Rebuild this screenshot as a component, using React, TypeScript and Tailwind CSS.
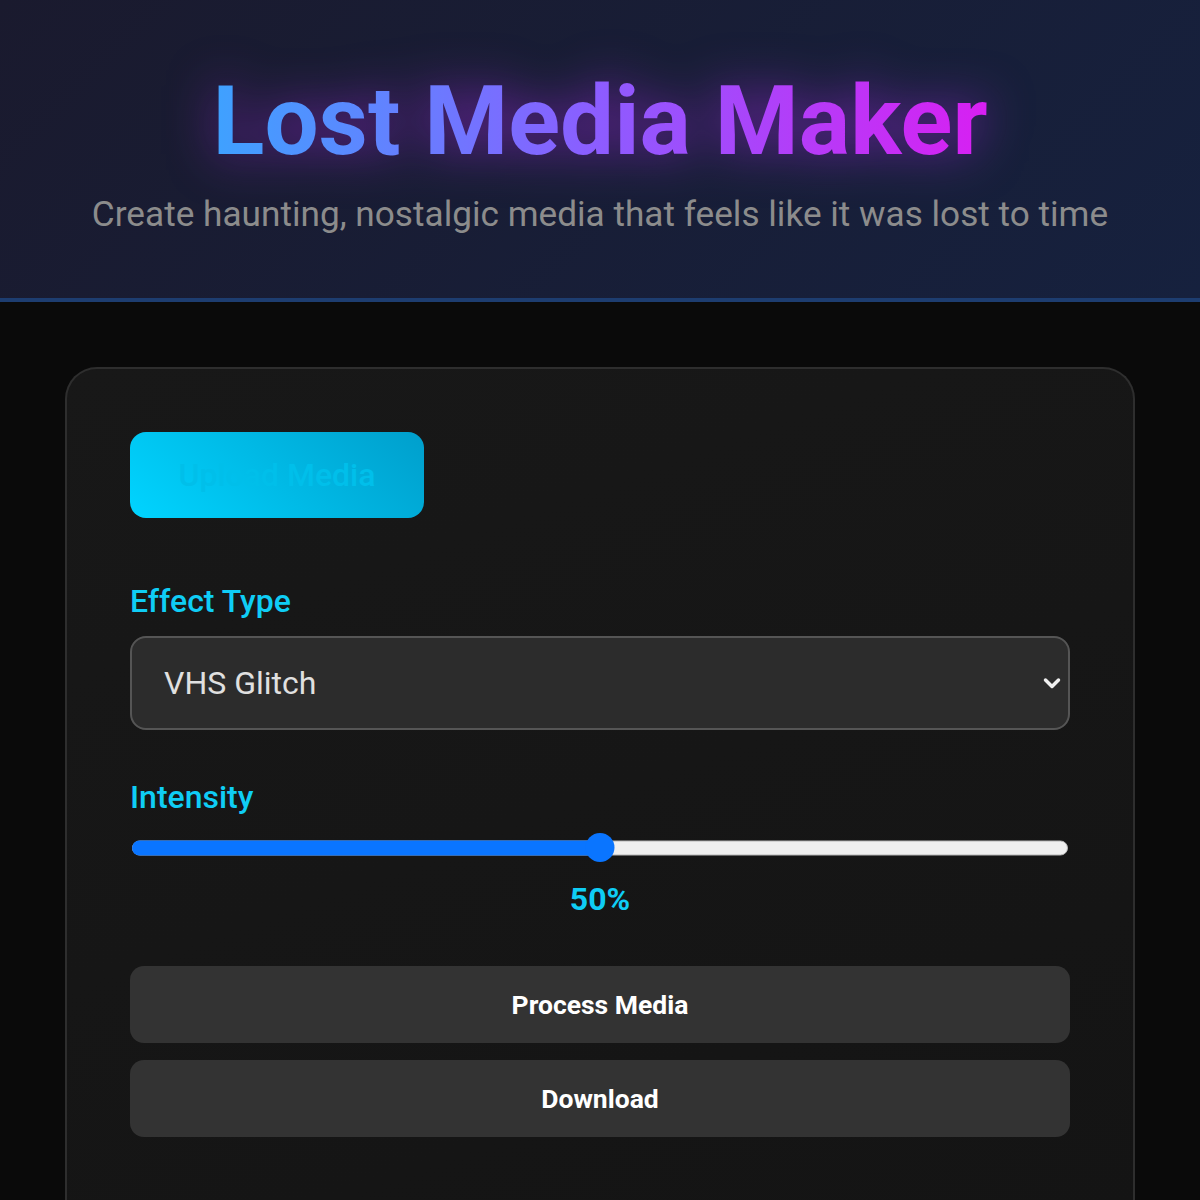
import {useState} from 'react'

const EFFECTS = ['VHS Glitch', 'Film Grain', 'Static Noise', 'Faded Photo']

export default function App() {
  const [effect, setEffect] = useState(EFFECTS[0])
  const [intensity] = useState(50)

  return (
    <div className="min-h-screen bg-[#0a0a0a] font-['Roboto','Liberation_Sans',sans-serif]">
      <header className="flex h-[302px] flex-col items-center border-b-4 border-[#1d3d70] bg-[linear-gradient(135deg,#1a1a2e,#16213e)] pt-[64px]">
        <h1 className="bg-[linear-gradient(90deg,#3ea2ff,#8d5cff_50%,#d81ff2)] bg-clip-text text-[96px] leading-[1.2] font-bold text-transparent drop-shadow-[0_0_24px_rgba(170,40,240,0.6)]">
          Lost Media Maker
        </h1>
        <p className="mt-[13px] text-[35.2px] leading-[1.3] text-[#8c8c8c]">
          Create haunting, nostalgic media that feels like it was lost to time
        </p>
      </header>

      <main className="px-[65px] pt-[65px]">
        <section className="rounded-t-[32px] border-2 border-b-0 border-[#2e2e2e] bg-[linear-gradient(160deg,#181818,#141414)] px-[63px] pt-[63px] pb-[80px]">
          <button
            type="button"
            className="h-[86px] w-[294px] rounded-[16px] bg-[linear-gradient(45deg,#00d4ff,#009fcc)] text-[32px] font-medium text-[#00bfea]"
          >
            Upload Media
          </button>

          <label className="mt-[63px] mb-[15px] block text-[32px] leading-[40px] font-medium text-[#0fcdf5]">
            Effect Type
          </label>
          <div className="relative">
            <select
              value={effect}
              onChange={(e) => setEffect(e.target.value)}
              className="h-[94px] w-full appearance-none rounded-[16px] border-2 border-[#555] bg-[#2c2c2c] pl-[32px] text-[32px] text-[#e0e0e0] outline-none"
            >
              {EFFECTS.map((e) => (
                <option key={e}>{e}</option>
              ))}
            </select>
            <svg
              aria-hidden
              viewBox="0 0 18 12"
              className="pointer-events-none absolute top-1/2 right-[9px] h-[12px] w-[18px] -translate-y-1/2"
            >
              <path
                d="M2.5 3 L9 9.5 L15.5 3"
                fill="none"
                stroke="#f0f0f0"
                strokeWidth="3.5"
                strokeLinecap="round"
                strokeLinejoin="round"
              />
            </svg>
          </div>

          <label className="mt-[47px] block text-[32px] leading-[40px] font-medium text-[#0fcdf5]">
            Intensity
          </label>
          <div className="relative mt-[16px] h-[29px] px-[2px]">
            <div className="absolute top-1/2 right-[2px] left-[2px] h-[15px] -translate-y-1/2 rounded-full border border-[#b5b5b5] bg-[#efefef]" />
            <div
              className="absolute top-1/2 left-[2px] h-[15px] -translate-y-1/2 rounded-l-full bg-[#0a75ff]"
              style={{width: `calc(${intensity}% - 2px)`}}
            />
            <div
              className="absolute top-0 h-[29px] w-[29px] -translate-x-1/2 rounded-full bg-[#0a75ff]"
              style={{left: `${intensity}%`}}
            />
          </div>
          <p className="mt-[17px] text-center text-[32px] leading-[40px] font-bold text-[#0fcdf5]">
            {intensity}%
          </p>

          <div className="mt-[47px] flex flex-col gap-[17px]">
            <button
              type="button"
              className="h-[77px] rounded-[14px] bg-[#333] text-[26.5px] font-bold text-white"
            >
              Process Media
            </button>
            <button
              type="button"
              className="h-[77px] rounded-[14px] bg-[#333] text-[26.5px] font-bold text-white"
            >
              Download
            </button>
          </div>
        </section>
      </main>
    </div>
  )
}
